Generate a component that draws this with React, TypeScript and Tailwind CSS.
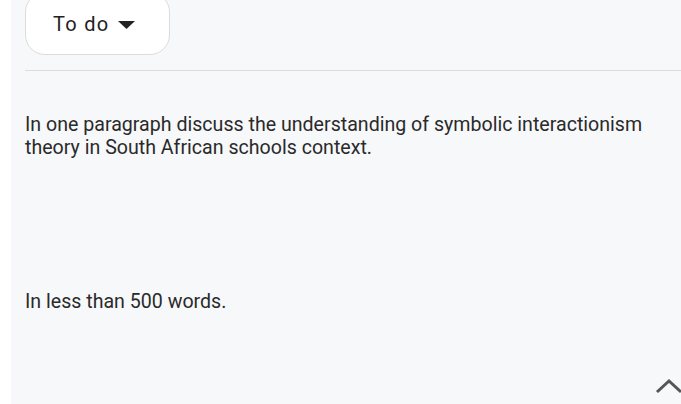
export default function App() {
  return (
    <div className="flex h-[404px] w-[681px] overflow-hidden bg-white" style={{ fontFamily: 'Roboto, "Noto Sans", sans-serif' }}>
      <div className="w-[11px] shrink-0 bg-white" />
      <div className="relative flex flex-1 flex-col bg-[#f7f8fa] pl-[14px]">
        <div className="-mt-[8px] flex h-[63px] w-[145px] items-center rounded-[20px] border border-[#dcdcdc] bg-white pl-[27px] pt-[1px]">
          <span className="text-[20px] leading-none tracking-[1.3px] text-[#222]">To do</span>
          <svg width="17" height="9" viewBox="0 0 17 9" className="ml-[8px] mt-[2px]">
            <polygon points="0,0 17,0 8.5,8" fill="#222" />
          </svg>
        </div>
        <div className="mt-[15px] h-px bg-[#dcdcdc]" />
        <p className="mt-[42px] pr-[20px] text-[19.6px] leading-[23px] text-[#2a2a2a]">
          In one paragraph discuss the understanding of symbolic interactionism theory in South African schools context.
        </p>
        <p className="mt-[131px] text-[19.6px] leading-[23px] text-[#2a2a2a]">In less than 500 words.</p>
        <svg width="28" height="16" viewBox="0 0 28 16" className="absolute right-[-2px] top-[378px]">
          <polyline points="2,14 14,3 26,14" fill="none" stroke="#555" strokeWidth="3" />
        </svg>
      </div>
    </div>
  );
}
